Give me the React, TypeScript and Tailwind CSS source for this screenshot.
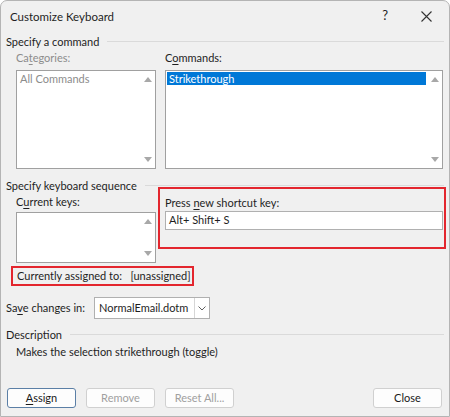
import { ReactNode } from 'react';

const font = { fontFamily: 'Lato, "Noto Sans", sans-serif' };

function U({ children }: { children: ReactNode }) {
  return <span className="underline underline-offset-[2px]">{children}</span>;
}

function SectionHeader({ label }: { label: string }) {
  return (
    <div className="flex h-[16px] items-center">
      <span className="whitespace-nowrap leading-none">{label}</span>
      <div className="ml-[8px] h-px flex-1 bg-[#dadada]" />
    </div>
  );
}

function ScrollArrows() {
  return (
    <div className="flex w-[15px] flex-col items-center justify-between py-[6px]">
      <svg width="8" height="5" viewBox="0 0 8 5">
        <path d="M0 5 L4 0 L8 5 Z" fill="#a8a8a8" />
      </svg>
      <svg width="8" height="5" viewBox="0 0 8 5">
        <path d="M0 0 L4 5 L8 0 Z" fill="#a8a8a8" />
      </svg>
    </div>
  );
}

function ListBox({ className, children }: { className: string; children?: ReactNode }) {
  return (
    <div className={`flex border border-[#a0a0a0] bg-white ${className}`}>
      <div className="min-w-0 flex-1 p-[1px]">{children}</div>
      <ScrollArrows />
    </div>
  );
}

function Button({ label, disabled, primary }: { label: ReactNode; disabled?: boolean; primary?: boolean }) {
  return (
    <div
      className={`flex h-[20px] w-[69px] items-center justify-center rounded-[3px] border bg-[#fdfdfd] ${
        primary ? 'border-[#5b7fa6]' : 'border-[#d0d0d0]'
      } ${disabled ? 'text-[#a0a0a0]' : 'text-[#1a1a1a]'}`}
    >
      {label}
    </div>
  );
}

export default function App() {
  return (
    <div
      style={font}
      className="flex h-[417px] w-[450px] flex-col overflow-hidden rounded-t-[7px] border border-[#b4b4b4] bg-[#f0f0f0] text-[11px] text-[#1e1e1e]"
    >
      {/* Title bar */}
      <div className="flex h-[30px] shrink-0 items-center pl-[9px]">
        <span className="flex-1 pt-[1px] text-[11.5px]">Customize Keyboard</span>
        <span className="mr-[33px] text-[13px]">?</span>
        <svg width="11" height="11" viewBox="0 0 11 11" className="mr-[17px]">
          <path d="M0.5 0.5 L10.5 10.5 M10.5 0.5 L0.5 10.5" stroke="#333" strokeWidth="1.1" />
        </svg>
      </div>

      <div className="flex flex-col px-[5px]">
        <div className="mt-[2px]">
          <SectionHeader label="Specify a command" />
        </div>

        <div className="flex gap-[9px] pl-[10px]">
          <div className="flex w-[140px] flex-col">
            <div className="mt-[2px] h-[14px] leading-[14px] text-[#8c8c8c]">
              Ca<U>t</U>egories:
            </div>
            <ListBox className="mt-[5px] h-[99px]">
              <div className="pl-[2px] leading-[13px] text-[#8c8c8c]">All Commands</div>
            </ListBox>
          </div>
          <div className="flex w-[278px] flex-col">
            <div className="mt-[2px] h-[14px] leading-[14px]">
              C<U>o</U>mmands:
            </div>
            <ListBox className="mt-[5px] h-[99px]">
              <div className="bg-[#0078d7] pl-[2px] leading-[13px] text-white">Strikethrough</div>
            </ListBox>
          </div>
        </div>

        <div className="mt-[8px]">
          <SectionHeader label="Specify keyboard sequence" />
        </div>

        <div className="flex gap-[2px] pl-[10px]">
          <div className="flex w-[140px] flex-col">
            <div className="mt-[2px] h-[14px] leading-[14px]">
              C<U>u</U>rrent keys:
            </div>
            <ListBox className="mt-[3px] h-[51px]" />
          </div>
          <div className="-mr-[3px] -mt-[6px] flex h-[62px] w-[288px] flex-col border-2 border-[#e3262e] pl-[5px] pr-[1px]">
            <div className="mt-[7px] h-[14px] leading-[14px]">
              Press <U>n</U>ew shortcut key:
            </div>
            <div className="mt-[1px] flex h-[19px] items-center border border-[#b0b0b0] bg-white pl-[3px]">
              Alt+ Shift+ S
            </div>
          </div>
        </div>

        <div className="ml-[5px] mt-[3px] flex h-[20px] w-[183px] items-center border-2 border-[#e3262e] pl-[4px]">
          <span className="whitespace-nowrap">Currently assigned to:&nbsp;&nbsp; [unassigned]</span>
        </div>

        <div className="mt-[11px] flex h-[22px] items-center">
          <span className="w-[88px] shrink-0 whitespace-nowrap">
            Sa<U>v</U>e changes in:
          </span>
          <div className="flex h-[22px] w-[116px] shrink-0 border border-[#b0b0b0] bg-white">
            <div className="flex flex-1 items-center pl-[4px]">NormalEmail.dotm</div>
            <div className="flex w-[15px] items-center justify-center border-l border-[#d6d6d6]">
              <svg width="8" height="5" viewBox="0 0 8 5">
                <path d="M0.5 0.5 L4 4 L7.5 0.5" stroke="#606060" strokeWidth="1" fill="none" />
              </svg>
            </div>
          </div>
        </div>

        <div className="mt-[7px]">
          <SectionHeader label="Description" />
        </div>
        <div className="mt-[3px] h-[14px] pl-[10px] leading-[14px]">
          Makes the selection strikethrough (toggle)
        </div>

        <div className="mt-[29px] flex items-center gap-[10px] pl-[1px] pr-[2px]">
          <Button primary label={<><U>A</U>ssign</>} />
          <Button disabled label="Remove" />
          <Button disabled label="Reset All..." />
          <div className="flex-1" />
          <Button label="Close" />
        </div>
      </div>
    </div>
  );
}
